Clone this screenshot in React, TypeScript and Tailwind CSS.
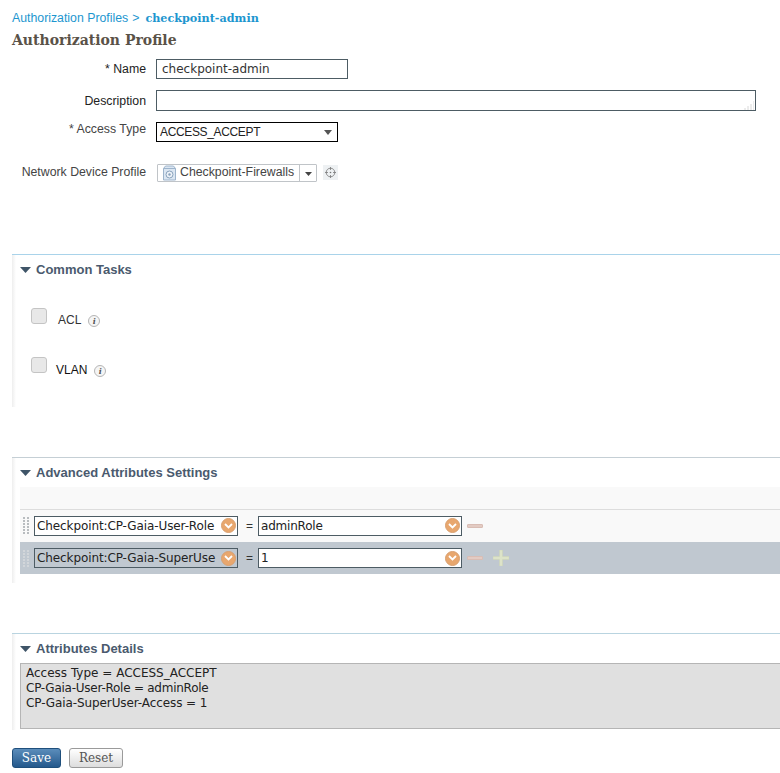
import type { ReactNode } from 'react';

const SANS = 'font-["Liberation_Sans",Arial,sans-serif]';

function Section({ title, height, border = 'border-[#c5cfd5]', children }: { title: string; height: string; border?: string; children: ReactNode }) {
  return (
    <section className={`ml-3 border-t bg-gradient-to-r from-[#eeeeee] to-white to-[4px] pl-2 ${border} ${height}`}>
      <div className="flex h-[29px] items-center">
        <Caret />
        <h2 className={`ml-[5px] text-[13px] font-bold text-[#4a5a6e] ${SANS}`}>{title}</h2>
      </div>
      {children}
    </section>
  );
}

function Caret() {
  return (
    <svg width="11" height="6" viewBox="0 0 11 6" className="mt-px">
      <path d="M0 0h11L5.500 6z" fill="#3f5568" />
    </svg>
  );
}

function InfoIcon() {
  return (
    <span className="inline-flex h-[12px] w-[12px] items-center justify-center rounded-full border border-[#b5b5b5] bg-[#f5f5f5] font-['DejaVu_Serif',serif] text-[8px] font-bold italic leading-none text-[#555]">
      i
    </span>
  );
}

function Combo() {
  return (
    <span className="mr-[1px] flex h-[15px] w-[15px] shrink-0 items-center justify-center rounded-full border border-[#d9a070] bg-[#e8a76e]">
      <svg width="9" height="6" viewBox="0 0 9 6">
        <path d="M1 1l3.500 3.500L8 1" fill="none" stroke="#fff" strokeWidth="1.800" />
      </svg>
    </span>
  );
}

function Grip({ fill }: { fill: string }) {
  return (
    <svg width="6" height="17" viewBox="0 0 6 17" className="shrink-0">
      {[1, 4, 7, 10, 13, 16].map((y) => (
        <g key={y} fill={fill}>
          <rect x="0" y={y - 1} width="2" height="2" />
          <rect x="4" y={y - 1} width="2" height="2" />
        </g>
      ))}
    </svg>
  );
}

function Minus() {
  return <span className="block h-[4px] w-[16px] rounded-[1px] border border-[#d9bdb4] bg-[#e3cbc3]" />;
}

function Plus() {
  return (
    <svg width="16" height="16" viewBox="0 0 16 16">
      <path d="M6.500 0h3v6.500H16v3H9.500V16h-3V9.500H0v-3h6.500z" fill="#dde3c8" stroke="#ccd4b4" strokeWidth="0.500" />
    </svg>
  );
}

function AttrRow({ name, value, selected }: { name: string; value: string; selected?: boolean }) {
  return (
    <div className={`flex items-center pl-[3px] ${selected ? 'h-[32px] bg-[#c0c8d0]' : 'h-[33px] border-t border-[#dddddd] bg-[#f9f9f9] pb-[1px]'}`}>
      <Grip fill={selected ? '#d2d6da' : '#b8bcbf'} />
      <div className={`ml-[5px] flex h-[20px] w-[204px] items-center justify-between overflow-hidden border border-[#4d5c64] pl-[2px] ${selected ? 'bg-[#c0c8d0]' : 'bg-white'}`}>
        <span className="whitespace-nowrap font-['DejaVu_Sans',sans-serif] text-[12px] tracking-[-0.1px] text-[#222]">{name}</span>
        <Combo />
      </div>
      <span className={`ml-[8px] w-[12px] text-[12px] text-[#333] ${SANS}`}>=</span>
      <div className="flex h-[20px] w-[204px] items-center justify-between border border-[#4d5c64] bg-white pl-[2px]">
        <span className="font-['DejaVu_Sans',sans-serif] text-[12px] tracking-[-0.2px] text-[#222]">{value}</span>
        <Combo />
      </div>
      <span className="ml-[5px]"><Minus /></span>
      {selected && <span className="ml-[10px]"><Plus /></span>}
    </div>
  );
}

function Label({ children, className = '' }: { children: ReactNode; className?: string }) {
  return <label className={`w-[146px] shrink-0 text-right text-[12.3px] ${className}`}>{children}</label>;
}

export default function App() {
  return (
    <div className={`h-[773px] w-[780px] overflow-hidden bg-white ${SANS}`}>
      <div className="ml-3 flex h-[14px] items-center pt-[18px] text-[12.3px] text-[#1d96cf]">
        <span>Authorization Profiles</span>
        <span className="ml-1">&gt;</span>
        <b className="ml-[6px] font-['DejaVu_Serif',serif] text-[11.2px]">checkpoint-admin</b>
      </div>
      <h1 className="ml-3 mt-[13px] font-['DejaVu_Serif',serif] text-[14px] font-bold leading-[18px] text-[#5a5248]">Authorization Profile</h1>

      <div className="mt-[10px] flex h-[20px] items-center">
        <Label className="text-[#222]">* Name</Label>
        <div className="ml-[10px] flex h-[20px] w-[192px] items-center border border-[#4d5c64] pl-[5px] font-['DejaVu_Sans',sans-serif] text-[12px] text-[#333]">checkpoint-admin</div>
      </div>
      <div className="mt-[11px] flex h-[21px] items-center">
        <Label className="pt-[2px] text-[#222]">Description</Label>
        <div className="relative ml-[10px] h-[21px] w-[600px] border border-[#4d5c64]">
          <svg width="10" height="9" viewBox="0 0 10 9" className="absolute bottom-0 right-[1px]">
            <path d="M1 9V7M4 9V5M7 9V3M10 9V0" stroke="#d8d8d8" strokeWidth="1" />
          </svg>
        </div>
      </div>
      <div className="mt-[11px] flex h-[20px] items-start">
        <Label className="-mt-[2px] text-[#444]">* Access Type</Label>
        <div className="ml-[10px] flex h-[20px] w-[182px] items-center justify-between border border-black pl-[3px] pr-[5px] text-[12px] tracking-[-0.35px] text-[#222]">
          ACCESS_ACCEPT
          <svg width="8" height="5" viewBox="0 0 8 5"><path d="M0 0h8L4 5z" fill="#555" /></svg>
        </div>
      </div>

      <div className="mt-[21px] flex h-[19px] items-center">
        <Label className="text-[#444]">Network Device Profile</Label>
        <div className="ml-[11px] flex h-[18px] w-[160px] items-center rounded-[1px] border border-[#c0c4c8] text-[12.3px] text-[#444]">
          <svg width="15" height="16" viewBox="0 0 15 16" className="ml-[4px] shrink-0">
            <path d="M1.500 3.500l2-2.500h8l2 2.500v11.500h-12z" fill="#dbe6f2" stroke="#9db4cc" />
            <path d="M1.500 3.500h12" stroke="#9db4cc" />
            <circle cx="7.500" cy="9.500" r="3.500" fill="#eef3f9" stroke="#8aa3bd" />
            <circle cx="7.500" cy="9.500" r="1.200" fill="#8aa3bd" />
          </svg>
          <span className="ml-[3px]">Checkpoint-Firewalls</span>
          <span className="ml-auto flex h-full w-[17px] items-center justify-center border-l border-[#c0c4c8]">
            <svg width="7" height="4" viewBox="0 0 7 4" className="mt-[2px]"><path d="M0 0h7L3.500 4z" fill="#444" /></svg>
          </span>
        </div>
        <span className="ml-[6px] flex h-[15px] w-[15px] items-center justify-center bg-[#eef1f3]">
          <svg width="11" height="11" viewBox="0 0 11 11">
            <circle cx="5.500" cy="5.500" r="4.300" fill="none" stroke="#777" strokeWidth="0.800" />
            <path d="M5.500 0v3M5.500 8v3M0 5.500h3M8 5.500h3" stroke="#777" strokeWidth="0.800" />
            <circle cx="5.500" cy="5.500" r="0.800" fill="#777" />
          </svg>
        </span>
      </div>

      <div className="mt-[72px]">
        <Section title="Common Tasks" height="h-[153px]" border="border-[#a9d3ea]">
          <div className="ml-[11px] mt-[24px] flex h-[16px] items-center">
            <span className="h-[16px] w-[16px] rounded-[3px] border border-[#c4c4c4] bg-[#e8e8e8]" />
            <span className="ml-[11px] mt-[7px] text-[12px] text-[#333]">ACL</span>
            <span className="ml-[7px] mt-[10px] flex"><InfoIcon /></span>
          </div>
          <div className="ml-[11px] mt-[33px] flex h-[16px] items-center">
            <span className="h-[16px] w-[16px] rounded-[3px] border border-[#c4c4c4] bg-[#e8e8e8]" />
            <span className="ml-[9px] mt-[10px] text-[12px] text-[#111]">VLAN</span>
            <span className="ml-[7px] mt-[12px] flex"><InfoIcon /></span>
          </div>
        </Section>
      </div>

      <div className="mt-[50px]">
        <Section title="Advanced Attributes Settings" height="h-[126px]">
          <div className="h-[22px] bg-[#f9f9f9]" />
          <AttrRow name="Checkpoint:CP-Gaia-User-Role" value="adminRole" />
          <AttrRow name="Checkpoint:CP-Gaia-SuperUse" value="1" selected />
        </Section>
      </div>

      <div className="mt-[50px]">
        <Section title="Attributes Details" height="h-[97px]" border="border-[#b9d4e0]">
          <div className="mr-[-2px] h-[66px] border border-[#b5b5b5] bg-[#e0e0e0] pl-[5px] pt-[2px] font-['DejaVu_Sans',sans-serif] text-[12px] leading-[15px] text-[#222]">
            <div>Access Type = ACCESS_ACCEPT</div>
            <div className="tracking-[-0.25px]">CP-Gaia-User-Role = adminRole</div>
            <div className="tracking-[-0.1px]">CP-Gaia-SuperUser-Access = 1</div>
          </div>
        </Section>
      </div>

      <div className="ml-3 mt-[18px] flex gap-2 font-['DejaVu_Serif',serif] text-[12px]">
        <button className="h-[20px] w-[49px] rounded-[3px] border border-[#1f4f7c] bg-gradient-to-b from-[#5b8dbb] to-[#24598c] text-white">Save</button>
        <button className="h-[20px] w-[54px] rounded-[3px] border border-[#9a9a9a] bg-gradient-to-b from-white to-[#dddddd] text-[#555]">Reset</button>
      </div>
    </div>
  );
}
